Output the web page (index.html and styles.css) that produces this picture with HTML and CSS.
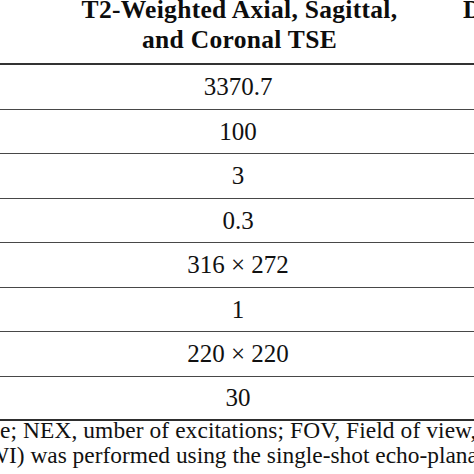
FILE: index.html
```html
<!DOCTYPE html>
<html>
<head>
<meta charset="utf-8">
<link rel="stylesheet" href="styles.css">
</head>
<body>
<div class="page">
  <div class="thead">
    <div class="th main">T2-Weighted Axial, Sagittal,<br>and Coronal TSE</div>
    <div class="th next">DWI</div>
  </div>
  <div class="row"><div class="td">3370.7</div></div>
  <div class="row"><div class="td">100</div></div>
  <div class="row"><div class="td">3</div></div>
  <div class="row"><div class="td">0.3</div></div>
  <div class="row"><div class="td">316 × 272</div></div>
  <div class="row"><div class="td">1</div></div>
  <div class="row"><div class="td">220 × 220</div></div>
  <div class="row last"><div class="td">30</div></div>
  <div class="note">
    <div class="line l1">e; NEX, umber of excitations; FOV, Field of view,</div>
    <div class="line l2">DWI) was performed using the single-shot echo-planar imaging</div>
  </div>
</div>
</body>
</html>
```

FILE: styles.css
```css
html, body {
  margin: 0;
  padding: 0;
  background: #ffffff;
  overflow: hidden;
}
body {
  width: 474px;
  height: 474px;
  font-family: "Liberation Serif", "Times New Roman", serif;
  color: #111111;
}
.page {
  width: 474px;
  overflow: hidden;
}
.thead {
  display: grid;
  grid-template-columns: 463px 200px;
  height: 63px;
  border-bottom: 2px solid #333333;
  width: 474px;
  overflow: hidden;
}
.th {
  font-weight: bold;
  font-size: 25.5px;
  line-height: 30px;
  margin-top: -5px;
  color: #0d0d0d;
  white-space: nowrap;
}
.main {
  padding-left: 16px;
  text-align: center;
  letter-spacing: 0.3px;
}
.next {
  text-align: left;
}
.row {
  height: 43.5px;
  border-bottom: 1px solid #484848;
  display: flex;
  align-items: center;
  justify-content: center;
  padding-left: 2px;
}
.row.last {
  border-bottom: 2px solid #2e2e2e;
  height: 42.5px;
}
.td {
  font-size: 25px;
  line-height: 30px;
  padding-top: 1px;
}
.note {
  font-size: 23.4px;
  line-height: 25px;
  margin-top: -3px;
  color: #111111;
}
.line {
  white-space: nowrap;
}
.l1 {
  letter-spacing: 0.1px;
}
.l2 {
  margin-left: -30px;
}
```
